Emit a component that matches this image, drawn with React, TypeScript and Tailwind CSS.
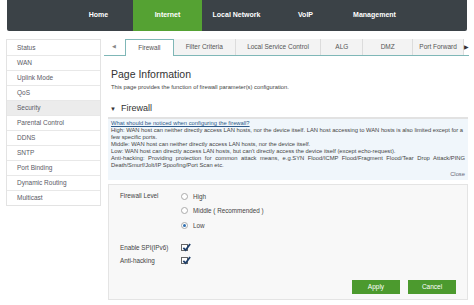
import React from "react";

const navItems = ["Home", "Internet", "Local Network", "VoIP", "Management"];
const sideItems = [
  "Status",
  "WAN",
  "Uplink Mode",
  "QoS",
  "Security",
  "Parental Control",
  "DDNS",
  "SNTP",
  "Port Binding",
  "Dynamic Routing",
  "Multicast",
];
const tabs = [
  { label: "Firewall", w: "w-[49px]" },
  { label: "Filter Criteria", w: "w-[62px]" },
  { label: "Local Service Control", w: "w-[86px]" },
  { label: "ALG", w: "w-[42px]" },
  { label: "DMZ", w: "w-[50px]" },
  { label: "Port Forward", w: "w-[51px]" },
];

function Radio({ checked }: { checked?: boolean }) {
  return (
    <span className="w-[7px] h-[7px] rounded-full border border-[#aaa] bg-white flex items-center justify-center">
      {checked && <span className="w-[3px] h-[3px] rounded-full bg-[#2f6fb0]" />}
    </span>
  );
}

function Check() {
  return (
    <span className="w-[7px] h-[7px] border border-[#666] bg-white relative block">
      <svg viewBox="0 0 10 10" className="absolute -top-[2px] left-0 w-[9px] h-[9px]">
        <path d="M1.5 5.5 L4 8 L9 1" stroke="#1f3f6a" strokeWidth="2" fill="none" />
      </svg>
    </span>
  );
}

export default function App() {
  return (
    <div className="w-[474px] h-[305px] bg-white overflow-hidden font-['Liberation_Sans',Arial,sans-serif] relative">
      {/* Top bar */}
      <div className="mx-[7px] h-[31px] bg-[#3b4247] rounded-b-[2px] flex pl-[57px]">
        {navItems.map((n) => (
          <div
            key={n}
            className={`w-[69px] h-full flex items-center justify-center text-[7px] font-bold text-white ${
              n === "Internet" ? "bg-[#55a233]" : ""
            }`}
          >
            {n}
          </div>
        ))}
      </div>

      <div className="flex mt-[8px]">
        {/* Sidebar */}
        <div className="ml-[6px] w-[95px] border border-[#e3e3e3] self-start">
          {sideItems.map((s, i) => (
            <div
              key={s}
              className={`h-[15px] flex items-center pl-[10px] text-[6.5px] text-[#5a5a66] ${
                i > 0 ? "border-t border-[#e8e8e8]" : ""
              } ${s === "Security" ? "bg-[#ececec]" : "bg-white"}`}
            >
              {s}
            </div>
          ))}
        </div>

        {/* Main */}
        <div className="ml-[3px] w-[365px] flex flex-col">
          {/* Tabs */}
          <div className="flex h-[17px] border-b border-[#7fb7b7] items-stretch">
            <div className="w-[21px] flex items-center justify-center text-[5px] text-[#888]">◀</div>
            {tabs.map((t, i) => (
              <div
                key={t.label}
                className={`${t.w} flex items-center justify-center text-[6.5px] ${
                  i === 0
                    ? "bg-white border border-b-0 border-[#7fb7b7] text-[#555] -mb-px"
                    : "bg-[#f3f3f3] border-r border-[#dcdcdc] text-[#555]"
                }`}
              >
                {t.label}
              </div>
            ))}
            <div className="flex-1 flex items-center justify-center text-[6px] text-[#333]">▶</div>
          </div>

          <div className="pl-[4px] pr-[1px]">
            <div className="pl-[3px] mt-[13px] text-[10.5px] text-[#333] leading-none">Page Information</div>
            <div className="pl-[3px] mt-[5px] text-[5.8px] text-[#444] leading-none">
              This page provides the function of firewall parameter(s) configuration.
            </div>
            <div className="pl-[2px] mt-[14px] flex items-center gap-[5px] text-[9px] text-[#333] leading-none">
              <span className="text-[6px]">▼</span>
              <span>Firewall</span>
            </div>
            <div className="mt-[4px] h-[2px] bg-[#e2e2e2]" />

            {/* Info box */}
            <div className="bg-[#f0f6fb] px-[3px] pt-[1px] pb-[2px] text-[5.8px] leading-[7px] text-[#444]">
              <div className="text-[#2e5a8a] underline">What should be noticed when configuring the firewall?</div>
              <div>
                High: WAN host can neither directly access LAN hosts, nor the device itself. LAN host accessing to WAN
                hosts is also limited except for a few specific ports.
              </div>
              <div>Middle: WAN host can neither directly access LAN hosts, nor the device itself.</div>
              <div>Low: WAN host can directly access LAN hosts, but can't directly access the device itself (except echo-request).</div>
              <div className="text-justify">
                Anti-hacking: Providing protection for common attack means, e.g.SYN Flood/ICMP Flood/Fragment Flood/Tear
                Drop Attack/PING Death/Smurf/Jolt/IP Spoofing/Port Scan etc.
              </div>
              <div className="text-right mt-[2px] text-[#667]">Close</div>
            </div>

            {/* Form box */}
            <div className="mt-[4px] h-[116px] bg-[#f8f8f8] border border-[#e4e4e4] relative text-[6.3px] text-[#444]">
              <div className="flex pl-[11px] pt-[7px]">
                <div className="w-[61px] leading-[8px]">Firewall Level</div>
                <div className="flex flex-col gap-[6.5px]">
                  <div className="flex items-center gap-[5px] h-[8px]">
                    <Radio />
                    <span>High</span>
                  </div>
                  <div className="flex items-center gap-[5px] h-[8px]">
                    <Radio />
                    <span>Middle ( Recommended )</span>
                  </div>
                  <div className="flex items-center gap-[5px] h-[8px]">
                    <Radio checked />
                    <span>Low</span>
                  </div>
                </div>
              </div>
              <div className="flex pl-[11px] mt-[14px] items-center h-[8px]">
                <div className="w-[61px]">Enable SPI(IPv6)</div>
                <Check />
              </div>
              <div className="flex pl-[11px] mt-[5px] items-center h-[8px]">
                <div className="w-[61px]">Anti-hacking</div>
                <Check />
              </div>
              <div className="absolute right-[11px] bottom-[5px] flex gap-[8px]">
                <div className="w-[48px] h-[14px] bg-[#4c9a2e] text-white text-[6.5px] flex items-center justify-center">
                  Apply
                </div>
                <div className="w-[48px] h-[14px] bg-[#4c9a2e] text-white text-[6.5px] flex items-center justify-center">
                  Cancel
                </div>
              </div>
            </div>
          </div>
        </div>
      </div>
    </div>
  );
}
